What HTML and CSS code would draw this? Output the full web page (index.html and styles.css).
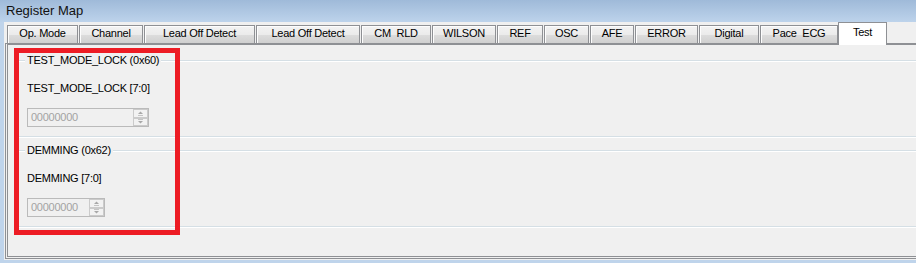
FILE: index.html
```html
<!DOCTYPE html>
<html lang="en">
<head>
<meta charset="utf-8">
<title>Register Map</title>
<link rel="stylesheet" href="styles.css">
</head>
<body>
<div class="window">
  <div class="titlebar">Register Map</div>
  <div class="client">
    <div class="tabs">
      <div class="tab">Op. Mode</div>
      <div class="tab">Channel</div>
      <div class="tab">Lead Off Detect</div>
      <div class="tab">Lead Off Detect</div>
      <div class="tab">CM&nbsp;&nbsp;RLD</div>
      <div class="tab">WILSON</div>
      <div class="tab">REF</div>
      <div class="tab">OSC</div>
      <div class="tab">AFE</div>
      <div class="tab">ERROR</div>
      <div class="tab">Digital</div>
      <div class="tab">Pace&nbsp;&nbsp;ECG</div>
      <div class="tab tab-active">Test</div>
    </div>
    <div class="pane">
      <div class="group">
        <div class="group-title"><span class="group-text">TEST_MODE_LOCK (0x60)</span></div>
        <div class="group-body">
          <div class="field-label">TEST_MODE_LOCK [7:0]</div>
          <div class="spin spin-wide">
            <div class="spin-value">00000000</div>
            <div class="spin-buttons">
              <div class="spin-btn"><svg width="7" height="5" viewBox="0 0 7 5"><path d="M3.5 0.5 L6 3 L1 3 Z" fill="#a8a8a8"/><rect x="1" y="4" width="5" height="1" fill="#c4c4c4"/></svg></div>
              <div class="spin-btn"><svg width="7" height="5" viewBox="0 0 7 5"><rect x="1" y="0" width="5" height="1" fill="#c4c4c4"/><path d="M1 2 L6 2 L3.5 4.5 Z" fill="#a8a8a8"/></svg></div>
            </div>
          </div>
        </div>
      </div>
      <div class="group group-second">
        <div class="group-title"><span class="group-text">DEMMING (0x62)</span></div>
        <div class="group-body">
          <div class="field-label">DEMMING [7:0]</div>
          <div class="spin spin-narrow">
            <div class="spin-value">00000000</div>
            <div class="spin-buttons">
              <div class="spin-btn"><svg width="7" height="5" viewBox="0 0 7 5"><path d="M3.5 0.5 L6 3 L1 3 Z" fill="#a8a8a8"/><rect x="1" y="4" width="5" height="1" fill="#c4c4c4"/></svg></div>
              <div class="spin-btn"><svg width="7" height="5" viewBox="0 0 7 5"><rect x="1" y="0" width="5" height="1" fill="#c4c4c4"/><path d="M1 2 L6 2 L3.5 4.5 Z" fill="#a8a8a8"/></svg></div>
            </div>
          </div>
        </div>
      </div>
    </div>
  </div>
</div>
<div class="highlight"></div>
</body>
</html>
```
FILE: styles.css
```css
html, body {
  margin: 0;
  padding: 0;
}
body {
  width: 916px;
  height: 263px;
  overflow: hidden;
  background: #bfd4eb;
  font-family: "Liberation Sans", Arial, sans-serif;
  font-size: 11px;
  letter-spacing: -0.25px;
  color: #000;
  position: relative;
}
.window {
  width: 916px;
}
.titlebar {
  height: 22px;
  line-height: 22px;
  padding-left: 6px;
  font-size: 13px;
  letter-spacing: 0;
  color: #111;
  background: linear-gradient(#9fbad9, #bdd3eb);
}
.client {
  margin-left: 4px;
  height: 238px;
  background: #f0f0f0;
  overflow: hidden;
}
.tabs {
  display: flex;
  align-items: flex-end;
  height: 21px;
  padding-left: 3px;
}
.tab {
  box-sizing: border-box;
  height: 18px;
  margin-right: 1px;
  border: 1px solid #8e9094;
  border-bottom: none;
  background: linear-gradient(#f3f3f3 0%, #ebebeb 50%, #dddddd 50%, #d0d0d0 100%);
  box-shadow: inset 1px 1px 0 #fdfdfd;
  line-height: 15px;
  text-align: center;
  white-space: nowrap;
  flex: none;
}
.tab:nth-child(1) { width: 71px; }
.tab:nth-child(2) { width: 64px; }
.tab:nth-child(3) { width: 111px; }
.tab:nth-child(4) { width: 104px; }
.tab:nth-child(5) { width: 70px; }
.tab:nth-child(6) { width: 64px; }
.tab:nth-child(7) { width: 46px; }
.tab:nth-child(8) { width: 45px; }
.tab:nth-child(9) { width: 44px; }
.tab:nth-child(10) { width: 63px; }
.tab:nth-child(11) { width: 60px; }
.tab:nth-child(12) { width: 78px; }
.tab.tab-active {
  width: 49px;
  height: 23px;
  margin-left: -1px;
  margin-bottom: -2px;
  padding-top: 2px;
  background: #fff;
  box-shadow: none;
  position: relative;
  z-index: 1;
}
.pane {
  box-sizing: border-box;
  width: 1000px;
  height: 216px;
  margin-left: 1px;
  border: 3px double #8e9094;
  border-top: 2px solid #8e9094;
  border-right: none;
}
.group {
  margin: 9px 0 0 10px;
  border-bottom: 1px solid #d5dfe5;
  box-shadow: 0 1px 0 #ffffff;
  padding-bottom: 9px;
}
.group-second {
  margin-top: 7px;
}
.group-title {
  display: flex;
  align-items: flex-start;
  height: 13px;
  line-height: 13px;
}
.group-title::before,
.group-title::after {
  content: "";
  height: 1px;
  margin-top: 6px;
  border-top: 1px solid #d5dfe5;
  border-bottom: 1px solid #ffffff;
}
.group-title::before {
  width: 7px;
  flex: none;
}
.group-title::after {
  flex: 1;
  height: 0;
}
.group-title::before {
  height: 0;
}
.group-text {
  padding: 0 2px;
  white-space: nowrap;
}
.group-body {
  padding-left: 9px;
}
.field-label {
  margin-top: 15px;
  line-height: 13px;
  height: 13px;
}
.spin {
  display: flex;
  box-sizing: border-box;
  height: 19px;
  margin-top: 13px;
  border: 1px solid #bababa;
  background: #f0f0f0;
}
.spin-wide { width: 122px; }
.spin-narrow { width: 78px; }
.spin-value {
  flex: 1;
  padding-left: 3px;
  line-height: 17px;
  color: #a3a3a3;
}
.spin-buttons {
  display: flex;
  flex-direction: column;
  width: 15px;
}
.spin-btn {
  flex: 1;
  box-sizing: border-box;
  border: 1px solid #cbcbcb;
  background: #f2f2f2;
  display: flex;
  align-items: center;
  justify-content: center;
}
.spin-btn svg {
  display: block;
}
.highlight {
  position: absolute;
  left: 14px;
  top: 48px;
  width: 166px;
  height: 187px;
  box-sizing: border-box;
  border: 5px solid #ed1c24;
  pointer-events: none;
}
```
